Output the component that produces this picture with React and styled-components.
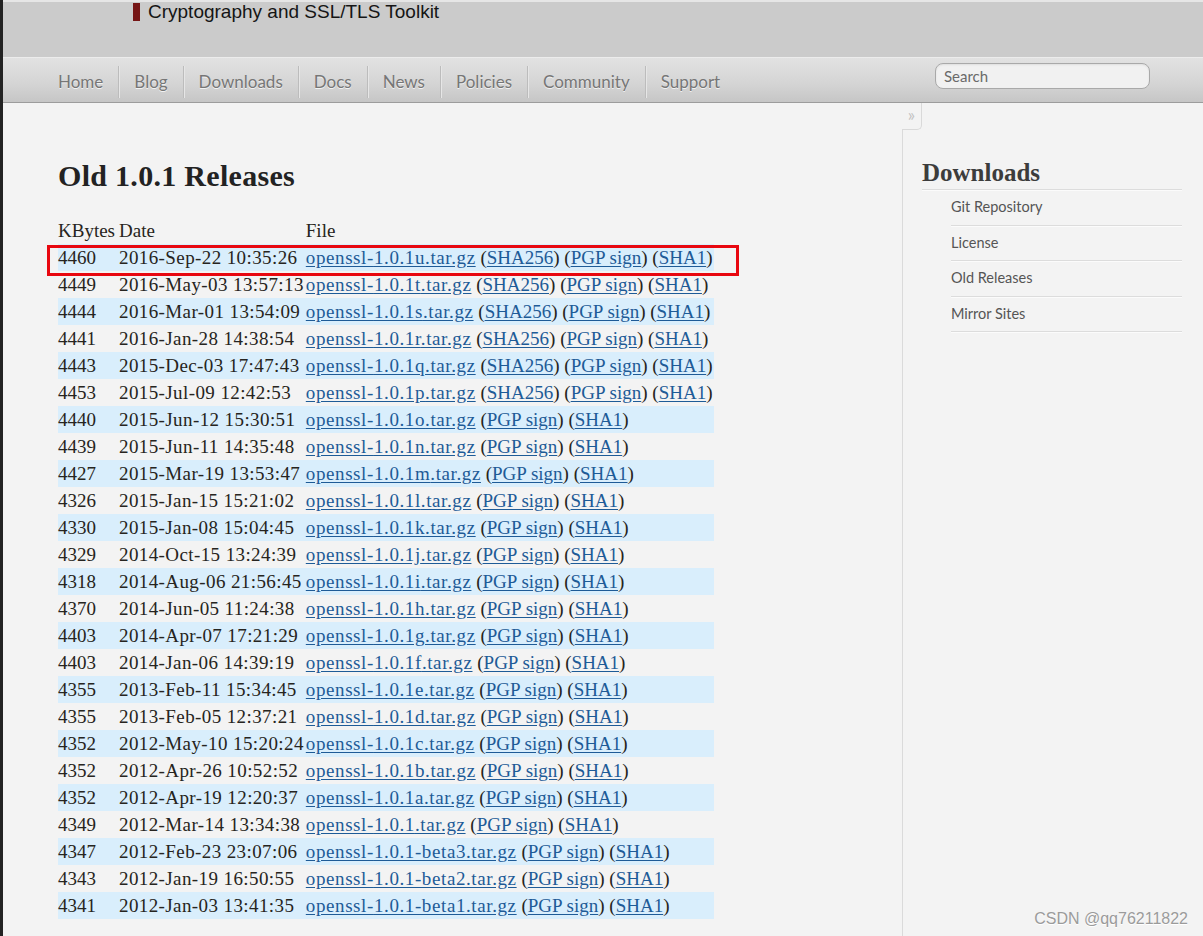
import React from "react";
import styled, { createGlobalStyle } from "styled-components";

const GlobalStyle = createGlobalStyle`
  html, body {
    margin: 0;
    padding: 0;
    background: #f3f3f3;
  }
  * {
    box-sizing: border-box;
  }
`;

const releases = [
  ["4460", "2016-Sep-22 10:35:26", "1.0.1u", true],
  ["4449", "2016-May-03 13:57:13", "1.0.1t", true],
  ["4444", "2016-Mar-01 13:54:09", "1.0.1s", true],
  ["4441", "2016-Jan-28 14:38:54", "1.0.1r", true],
  ["4443", "2015-Dec-03 17:47:43", "1.0.1q", true],
  ["4453", "2015-Jul-09 12:42:53", "1.0.1p", true],
  ["4440", "2015-Jun-12 15:30:51", "1.0.1o"],
  ["4439", "2015-Jun-11 14:35:48", "1.0.1n"],
  ["4427", "2015-Mar-19 13:53:47", "1.0.1m"],
  ["4326", "2015-Jan-15 15:21:02", "1.0.1l"],
  ["4330", "2015-Jan-08 15:04:45", "1.0.1k"],
  ["4329", "2014-Oct-15 13:24:39", "1.0.1j"],
  ["4318", "2014-Aug-06 21:56:45", "1.0.1i"],
  ["4370", "2014-Jun-05 11:24:38", "1.0.1h"],
  ["4403", "2014-Apr-07 17:21:29", "1.0.1g"],
  ["4403", "2014-Jan-06 14:39:19", "1.0.1f"],
  ["4355", "2013-Feb-11 15:34:45", "1.0.1e"],
  ["4355", "2013-Feb-05 12:37:21", "1.0.1d"],
  ["4352", "2012-May-10 15:20:24", "1.0.1c"],
  ["4352", "2012-Apr-26 10:52:52", "1.0.1b"],
  ["4352", "2012-Apr-19 12:20:37", "1.0.1a"],
  ["4349", "2012-Mar-14 13:34:38", "1.0.1"],
  ["4347", "2012-Feb-23 23:07:06", "1.0.1-beta3"],
  ["4343", "2012-Jan-19 16:50:55", "1.0.1-beta2"],
  ["4341", "2012-Jan-03 13:41:35", "1.0.1-beta1"],
];

const navItems = ["Home", "Blog", "Downloads", "Docs", "News", "Policies", "Community", "Support"];
const sideLinks = ["Git Repository", "License", "Old Releases", "Mirror Sites"];

const Page = styled.div`
  position: relative;
  min-height: 936px;
  border-left: 3px solid #232323;
  background: #f3f3f3;
`;

const Masthead = styled.header`
  height: 57px;
  background: #cbcbcb;
  border-top: 2px solid #e6e6e6;
  padding-left: 130px;
`;

const Tagline = styled.div`
  display: flex;
  align-items: center;
  gap: 8px;
  height: 20px;
  font-family: "Liberation Sans", Arial, sans-serif;
  font-size: 19px;
  color: #151515;
`;

const TagMark = styled.span`
  display: block;
  width: 7px;
  height: 18px;
  background: #761515;
`;

const NavBar = styled.nav`
  display: flex;
  align-items: flex-start;
  height: 46px;
  border-top: 1px solid #ececec;
  border-bottom: 1px solid #9c9c9c;
  background: linear-gradient(#e2e2e2, #d4d4d4 60%, #c6c6c6);
  padding-left: 40px;
`;

const NavList = styled.ul`
  display: flex;
  list-style: none;
  margin: 8px 0 0;
  padding: 0;
`;

const NavItem = styled.li`
  padding: 0 15px;
  line-height: 32px;
  font-family: Lato, "Open Sans", sans-serif;
  font-size: 17px;
  color: #767676;
  text-shadow: 0 1px 0 #f2f2f2;
  border-left: ${(p) => (p.first ? "none" : "1px solid #bcbcbc")};
  box-shadow: ${(p) => (p.first ? "none" : "inset 1px 0 0 #e6e6e6")};
`;

const Search = styled.input`
  margin: 5px 53px 0 auto;
  width: 215px;
  height: 26px;
  border: 1px solid #a9a9a9;
  border-radius: 8px;
  background: #f1f1f1;
  box-shadow: inset 0 1px 2px rgba(0, 0, 0, 0.08);
  padding: 0 8px;
  font-family: Lato, "Open Sans", sans-serif;
  font-size: 15px;
  color: #555;
  outline: none;
  &::placeholder {
    color: #6a6a6a;
  }
`;

const Main = styled.div`
  display: flex;
`;

const Content = styled.main`
  flex: 1;
  padding: 56px 0 0 55px;
  font-family: "Liberation Serif", "Times New Roman", serif;
  color: #262420;
`;

const Title = styled.h1`
  margin: 0;
  font-size: 30px;
  line-height: 34px;
  font-weight: bold;
  letter-spacing: 0.3px;
  color: #222;
`;

const ReleaseTable = styled.table`
  margin-top: 24px;
  border-collapse: collapse;
  font-size: 19px;
  line-height: 21px;

  th,
  td {
    padding: 3px 1px 3px 0;
    text-align: left;
    font-weight: normal;
    white-space: nowrap;
    vertical-align: middle;
  }

  th:first-child,
  td:first-child {
    padding-right: 4px;
  }

  th:nth-child(2),
  td:nth-child(2) {
    padding-right: 2px;
  }

  tbody tr:nth-child(odd) {
    background: #d9eefc;
  }
`;

const DateCell = styled.td`
  letter-spacing: 0.4px;
`;

const FileLink = styled.a`
  color: #1e5b97;
  text-decoration: underline;
  text-underline-offset: 2px;
  letter-spacing: ${(p) => (p.wide ? "0.6px" : "normal")};
`;

const Sidebar = styled.aside`
  width: 301px;
  display: flex;
  flex-direction: column;
`;

const Toggle = styled.div`
  width: 20px;
  height: 27px;
  border-right: 1px solid #d9d9d9;
  border-bottom: 1px solid #d9d9d9;
  border-bottom-right-radius: 5px;
  color: #c2c2c2;
  font-family: Lato, sans-serif;
  font-size: 17px;
  line-height: 24px;
  text-align: center;
`;

const SideBody = styled.div`
  flex: 1;
  min-height: 806px;
  border-left: 1px solid #dadada;
  padding: 29px 21px 0 19px;
`;

const SideTitle = styled.h3`
  margin: 0;
  padding-bottom: 2px;
  font-family: "Liberation Serif", "Times New Roman", serif;
  font-size: 25px;
  line-height: 28px;
  font-weight: bold;
  color: #3c3c3c;
  border-bottom: 1px solid #dcdcdc;
  box-shadow: 0 1px 0 #fbfbfb;
`;

const SideList = styled.ul`
  list-style: none;
  margin: 0 0 0 29px;
  padding: 0;
`;

const SideItem = styled.li`
  height: 35.5px;
  padding-top: 7px;
  border-bottom: 1px solid #dcdcdc;
  box-shadow: 0 1px 0 #fbfbfb;
  font-family: Lato, "Open Sans", sans-serif;
  font-size: 14.5px;
  line-height: 20px;
  color: #555;
`;

const Highlight = styled.div`
  position: absolute;
  left: 44px;
  top: 245px;
  width: 692px;
  height: 31px;
  border: 3px solid #e8070f;
  pointer-events: none;
`;

const Watermark = styled.div`
  position: absolute;
  right: 15px;
  bottom: 8px;
  font-family: "Liberation Sans", Arial, sans-serif;
  font-size: 16px;
  color: #9b9b9b;
  text-shadow: 0 1px 0 #fff;
`;

const ReleaseRow = ({ size, date, version, sha256 }) => (
  <tr>
    <td>{size}</td>
    <DateCell>{date}</DateCell>
    <td>
      <FileLink href="#" wide>
        openssl-{version}.tar.gz
      </FileLink>{" "}
      {sha256 && (
        <>
          (<FileLink href="#">SHA256</FileLink>){" "}
        </>
      )}
      (<FileLink href="#">PGP sign</FileLink>) (<FileLink href="#">SHA1</FileLink>)
    </td>
  </tr>
);

const App = () => (
  <Page>
    <GlobalStyle />
    <Masthead>
      <Tagline>
        <TagMark />
        Cryptography and SSL/TLS Toolkit
      </Tagline>
    </Masthead>
    <NavBar>
      <NavList>
        {navItems.map((item, i) => (
          <NavItem key={item} first={i === 0}>
            {item}
          </NavItem>
        ))}
      </NavList>
      <Search placeholder="Search" />
    </NavBar>
    <Main>
      <Content>
        <Title>Old 1.0.1 Releases</Title>
        <ReleaseTable>
          <thead>
            <tr>
              <th>KBytes</th>
              <th>Date</th>
              <th>File</th>
            </tr>
          </thead>
          <tbody>
            {releases.map(([size, date, version, sha256]) => (
              <ReleaseRow key={version} size={size} date={date} version={version} sha256={sha256} />
            ))}
          </tbody>
        </ReleaseTable>
      </Content>
      <Sidebar>
        <Toggle>»</Toggle>
        <SideBody>
          <SideTitle>Downloads</SideTitle>
          <SideList>
            {sideLinks.map((link) => (
              <SideItem key={link}>{link}</SideItem>
            ))}
          </SideList>
        </SideBody>
      </Sidebar>
    </Main>
    <Highlight />
    <Watermark>CSDN @qq76211822</Watermark>
  </Page>
);

export default App;
